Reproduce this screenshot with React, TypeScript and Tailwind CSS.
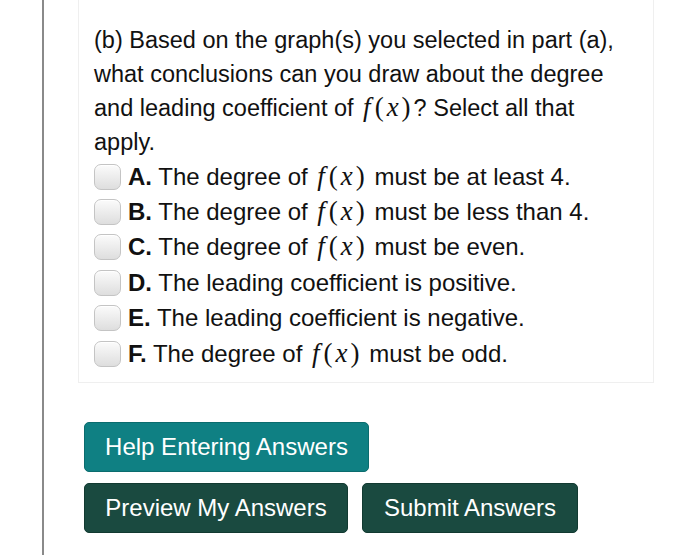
const options = [
  { key: "A.", before: "The degree of ", math: true, after: " must be at least 4." },
  { key: "B.", before: "The degree of ", math: true, after: " must be less than 4." },
  { key: "C.", before: "The degree of ", math: true, after: " must be even." },
  { key: "D.", before: "The leading coefficient is positive.", math: false, after: "" },
  { key: "E.", before: "The leading coefficient is negative.", math: false, after: "" },
  { key: "F.", before: "The degree of ", math: true, after: " must be odd." },
];

function Fx() {
  return (
    <span className="mx-[3px] inline-block font-['Liberation_Serif',serif] text-[27px] leading-none">
      <i className="mr-[4px]">f</i>(<i className="mx-[3px]">x</i>)
    </span>
  );
}

function Checkbox() {
  return (
    <span className="inline-block h-[26px] w-[27px] shrink-0 rounded-[7px] border border-[#c4c4c4] bg-gradient-to-b from-[#fbfbfb] to-[#dedede] shadow-[inset_0_1px_0_#fff]" />
  );
}

export default function App() {
  return (
    <div className="flex h-[555px] w-[700px] overflow-hidden bg-white font-['Liberation_Sans',Arial,sans-serif] text-[#111]">
      <div className="ml-[42px] w-[2px] bg-[#8a8a8a]" />
      <div className="flex flex-col">
        <div className="ml-[34px] w-[576px] border-x border-b border-[#efefef] pb-[11px] pl-[15px] pt-[23px]">
          <p className="w-[540px] text-[23.5px] leading-[34px]">
            (b) Based on the graph(s) you selected in part (a), what conclusions can you draw about the degree
            and leading coefficient of <Fx />? Select all that apply.
          </p>
          <div className="flex flex-col">
            {options.map((o) => (
              <div key={o.key} className="flex h-[35.4px] items-center gap-[7px]">
                <Checkbox />
                <span className="whitespace-nowrap text-[24px]">
                  <b>{o.key}</b> {o.before}
                  {o.math && <Fx />}
                  {o.after}
                </span>
              </div>
            ))}
          </div>
        </div>
        <div className="ml-[40px] mt-[39px] flex flex-col gap-[11px]">
          <button className="h-[50px] w-[285px] rounded-[5px] border border-[#0b6c6e] bg-[#0f8083] text-[24px] text-white">
            Help Entering Answers
          </button>
          <div className="flex gap-[14px]">
            <button className="h-[50px] w-[264px] rounded-[5px] border border-[#123a31] bg-[#1a4a40] text-[24px] text-white">
              Preview My Answers
            </button>
            <button className="h-[50px] w-[216px] rounded-[5px] border border-[#123a31] bg-[#1a4a40] text-[24px] text-white">
              Submit Answers
            </button>
          </div>
        </div>
      </div>
    </div>
  );
}
